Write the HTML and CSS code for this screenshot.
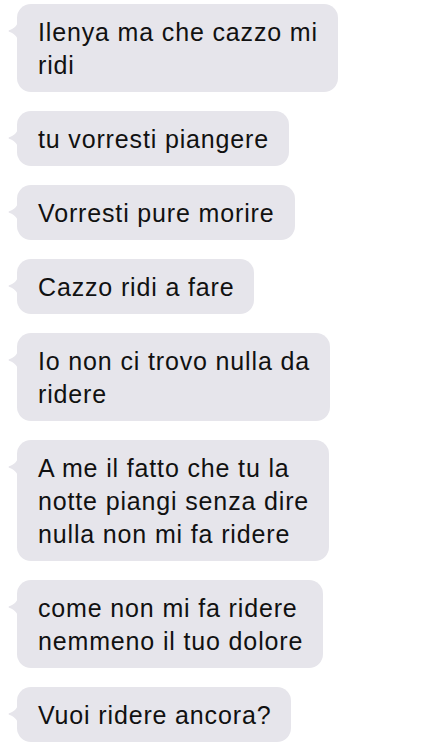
FILE: index.html
```html
<!DOCTYPE html>
<html lang="it">
<head>
<meta charset="utf-8">
<title>Messaggi</title>
<link rel="stylesheet" href="styles.css">
</head>
<body>
<main class="thread">
  <div class="bubble">Ilenya ma che cazzo mi<br>ridi</div>
  <div class="bubble">tu vorresti piangere</div>
  <div class="bubble">Vorresti pure morire</div>
  <div class="bubble">Cazzo ridi a fare</div>
  <div class="bubble">Io non ci trovo nulla da<br>ridere</div>
  <div class="bubble">A me il fatto che tu la<br>notte piangi senza dire<br>nulla non mi fa ridere</div>
  <div class="bubble">come non mi fa ridere<br>nemmeno il tuo dolore</div>
  <div class="bubble">Vuoi ridere ancora?</div>
</main>
</body>
</html>
```
FILE: styles.css
```css
html, body {
  margin: 0;
  padding: 0;
  background: #ffffff;
}

.thread {
  display: flex;
  flex-direction: column;
  align-items: flex-start;
  gap: 19px;
  padding: 4px 0 0 17px;
}

.bubble {
  position: relative;
  background: #e6e5eb;
  color: #111111;
  font-family: "Liberation Sans", Arial, sans-serif;
  font-size: 25px;
  line-height: 33px;
  letter-spacing: 0.85px;
  padding: 12px 20px 10px 21px;
  border-radius: 14px;
  white-space: nowrap;
}

.bubble::before {
  content: "";
  position: absolute;
  left: -9px;
  top: 16px;
  width: 10px;
  height: 22px;
  background: #e6e5eb;
  clip-path: path("M10 0 C10 6 5 9 1 10.3 Q0 11 1 11.7 C5 13 10 16 10 22 Z");
}
```
